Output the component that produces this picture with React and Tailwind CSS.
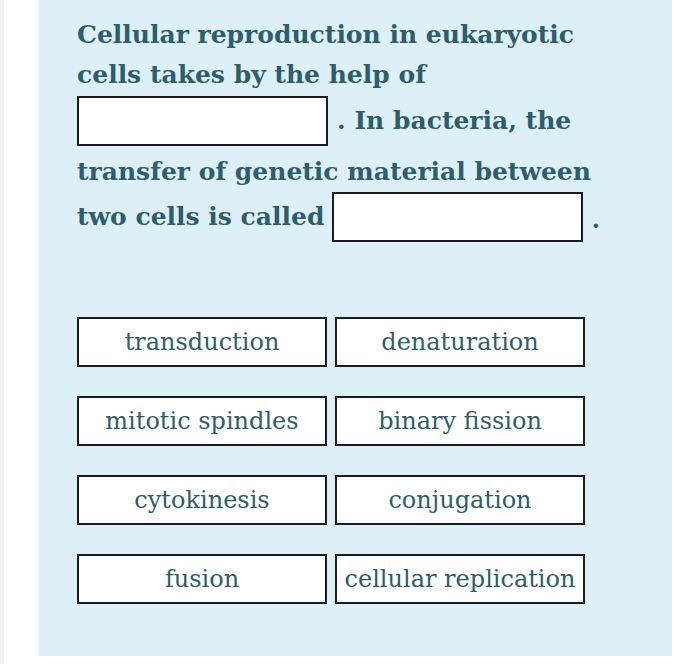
import React from "react";

const options = [
  ["transduction", "denaturation"],
  ["mitotic spindles", "binary fission"],
  ["cytokinesis", "conjugation"],
  ["fusion", "cellular replication"],
];

// empty drop target inside the sentence
const Blank = ({ className = "" }) => (
  <span className={`inline-block h-[50px] w-[251px] border-2 border-[#1c1c1c] bg-white ${className}`} />
);

const App = () => {
  return (
    <div
      className="flex min-h-[664px] w-[700px] bg-white"
      style={{ fontFamily: '"DejaVu Serif", "Liberation Serif", serif' }}
    >
      <div className="w-[4px] bg-[#f1f1f1]" />
      <div className="ml-[35px] h-[656px] w-[633px] bg-[#ddf0f8] pl-[38px] pt-[15px] text-[#2e5e6b]">
        {/* question sentence, one line per row */}
        <div className="text-[25px] font-bold leading-[40px]">
          <div className="whitespace-nowrap">Cellular reproduction in eukaryotic</div>
          <div className="whitespace-nowrap">cells takes by the help of</div>
          <div className="mt-[1px] flex h-[50px] items-center whitespace-nowrap">
            <Blank />
            <span className="ml-[9px]">. In bacteria, the</span>
          </div>
          <div className="mt-[6px] whitespace-nowrap">transfer of genetic material between</div>
          <div className="flex h-[50px] items-center whitespace-nowrap">
            <span className="mr-[8px]">two cells is called</span>
            <Blank />
            <span className="ml-[8px] mt-[6px]">.</span>
          </div>
        </div>

        {/* answer choices */}
        <div className="mt-[75px] flex flex-col gap-[29px]">
          {options.map((row) => (
            <div key={row[0]} className="flex gap-[8px]">
              {row.map((label) => (
                <div
                  key={label}
                  className="flex h-[50px] w-[250px] items-center justify-center whitespace-nowrap border-2 border-[#1c1c1c] bg-white text-[24px]"
                >
                  {label}
                </div>
              ))}
            </div>
          ))}
        </div>
      </div>
    </div>
  );
};

export default App;
